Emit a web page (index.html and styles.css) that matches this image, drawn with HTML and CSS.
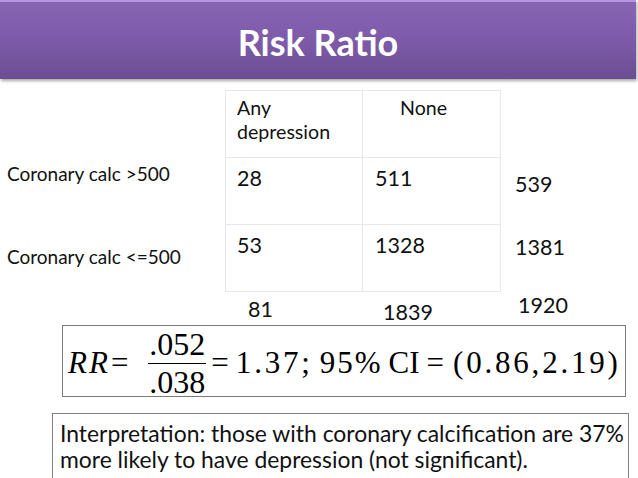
FILE: index.html
```html
<!DOCTYPE html>
<html lang="en">
<head>
<meta charset="utf-8">
<title>Risk Ratio</title>
<link rel="stylesheet" href="styles.css">
</head>
<body>
<div class="slide">
  <header class="title"><h1>Risk Ratio</h1></header>
  <main class="data">
    <div class="cell head c1 r0">Any<br>depression</div>
    <div class="cell head c2 r0"><span class="none">None</span></div>

    <div class="label l1">Coronary calc &gt;500</div>
    <div class="cell fig c1 r1">28</div>
    <div class="cell fig c2 r1">511</div>
    <div class="total fig t1">539</div>

    <div class="label l2">Coronary calc &lt;=500</div>
    <div class="cell fig c1 r2">53</div>
    <div class="cell fig c2 r2">1328</div>
    <div class="total fig t2">1381</div>

    <div class="sum fig s1">81</div>
    <div class="sum fig s2">1839</div>
    <div class="total fig t3">1920</div>
  </main>
  <div class="formula">
    <span class="it">RR</span><span class="op op1">=</span><span class="frac"><span class="num">.052</span><span class="den">.038</span></span><span class="op op2">=</span><span class="n v1">1.37;</span><span class="n v2">95%</span><span class="n v3">CI</span><span class="op op3">=</span><span class="n v4">(0.86,2.19)</span>
  </div>
  <div class="interp">Interpretation: those with coronary calcification are 37% more likely to have depression (not significant).</div>
</div>
</body>
</html>
```
FILE: styles.css
```css
html, body {
  margin: 0;
  padding: 0;
  background: #ffffff;
}
body {
  width: 638px;
  height: 478px;
  overflow: hidden;
  font-family: Lato, "Open Sans", sans-serif;
  color: #111;
}
.slide {
  width: 638px;
  height: 478px;
  overflow: hidden;
}
.title {
  height: 77px;
  margin-right: 2px;
  border-top: 2px solid #b994e0;
  background: linear-gradient(#8865b3 0%, #7f5cab 45%, #6c4d93 100%);
  box-shadow: 1px 2px 3px rgba(0, 0, 0, 0.35);
  display: flex;
  align-items: center;
  justify-content: center;
}
.title h1 {
  margin: 0;
  color: #ffffff;
  font-family: Lato, sans-serif;
  font-weight: 700;
  font-size: 36px;
  line-height: 1;
  padding-top: 2px;
}
.data {
  margin-top: 11px;
  display: grid;
  grid-template-columns: 225px 137px 139px 1fr;
  grid-template-rows: 67px 67px 68px 33px;
  font-size: 19.6px;
  line-height: 24px;
}
.fig { font-size: 21.5px; }
.cell {
  border-top: 1px solid #e8e8e8;
  border-left: 1px solid #e8e8e8;
  padding: 8px 0 0 11px;
}
.cell.c1 { grid-column: 2; }
.cell.c2 { grid-column: 3; border-right: 1px solid #e8e8e8; padding-left: 12px; }
.r0 { grid-row: 1; padding-top: 5px; }
.r1 { grid-row: 2; }
.r2 { grid-row: 3; border-bottom: 1px solid #e8e8e8; }
.none { padding-left: 25px; }
.label {
  grid-column: 1;
  padding-left: 7px;
  font-size: 19px;
}
.l1 { grid-row: 2; padding-top: 5px; }
.l2 { grid-row: 3; padding-top: 21px; }
.total {
  grid-column: 4;
  padding-left: 14px;
}
.t1 { grid-row: 2; padding-top: 15px; }
.t2 { grid-row: 3; padding-top: 11px; }
.t3 { grid-row: 4; padding-top: 1px; padding-left: 17px; }
.sum { grid-row: 4; }
.s1 { grid-column: 2; padding: 5px 0 0 23px; }
.s2 { grid-column: 3; padding: 8px 0 0 21px; }
.formula {
  margin-left: 62px;
  width: 564px;
  height: 72px;
  box-sizing: border-box;
  border: 1px solid #7a7a7a;
  display: flex;
  align-items: center;
  padding: 4px 0 0 5px;
  font-family: "Liberation Serif", "Times New Roman", serif;
  font-size: 31px;
  line-height: 30px;
  color: #000;
  white-space: nowrap;
}
.formula .it { font-style: italic; letter-spacing: 2px; }
.formula .op1 { margin: 0 0 0 1px; }
.formula .frac {
  display: flex;
  flex-direction: column;
  align-items: center;
  line-height: 28px;
  margin-left: 20px;
  font-size: 32px;
}
.formula .num {
  border-bottom: 1px solid #000;
  padding: 0 1px 5px;
}
.formula .den { padding-top: 4px; }
.formula .op2 { margin: 0 7px 0 5px; }
.formula .v1 { letter-spacing: 2.8px; }
.formula .v2 { margin-left: 7px; letter-spacing: 2px; }
.formula .v3 { margin-left: 6px; }
.formula .op3 { margin: 0 9px 0 7px; }
.formula .v4 { letter-spacing: 2.8px; }
.interp {
  margin: 16px 0 0 52px;
  width: 577px;
  height: 80px;
  box-sizing: border-box;
  border: 1px solid #808080;
  padding: 6px 0 0 7px;
  font-size: 22.9px;
  line-height: 26px;
}
```
